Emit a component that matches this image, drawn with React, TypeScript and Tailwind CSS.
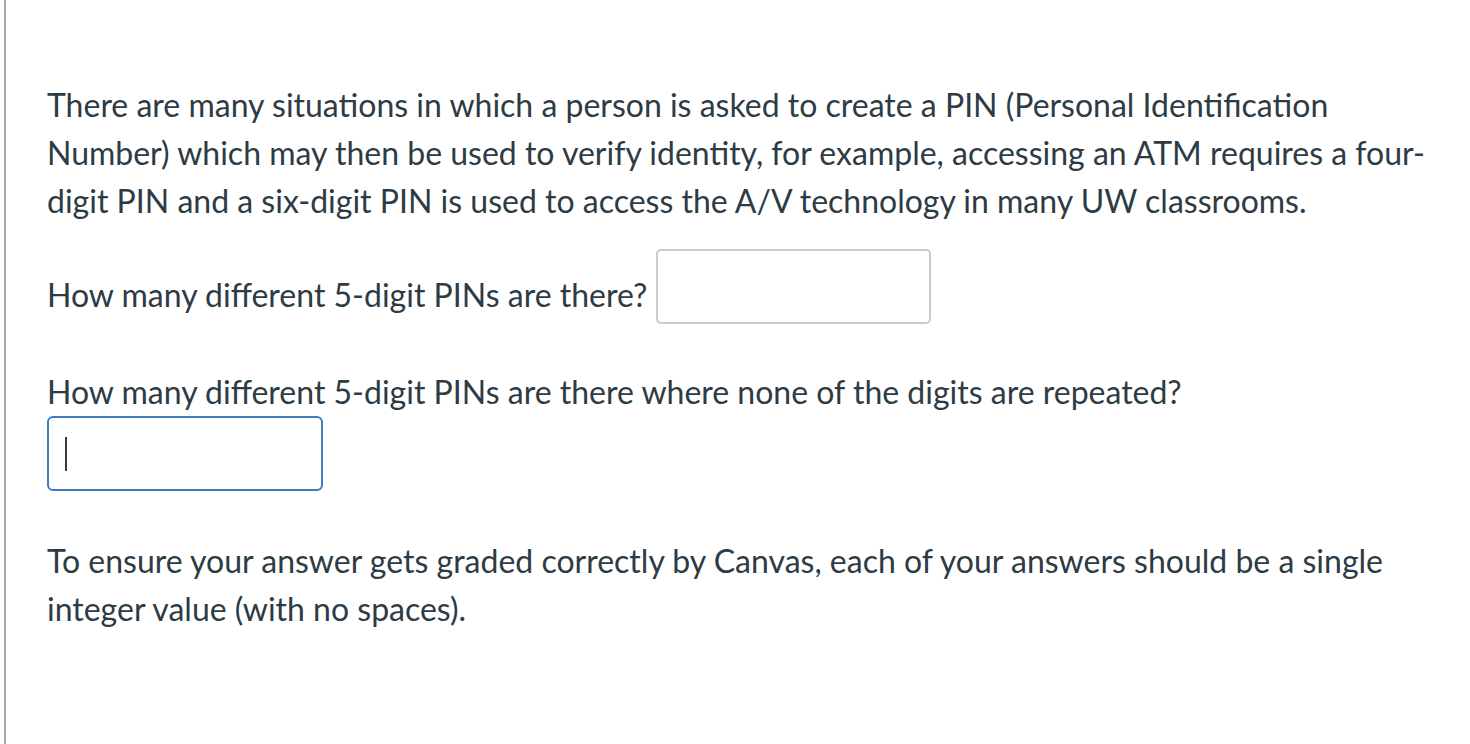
export default function App() {
  return (
    <div className="w-[1470px] h-[744px] bg-white overflow-hidden" style={{ fontFamily: 'Lato, "Noto Sans", sans-serif' }}>
      <div className="ml-[4px] h-full border-l-2 border-[#a8a8a8] pl-[41px] pr-[20px] text-[32px] leading-[48px] text-[#2d3b45]">
        <p className="pt-[81px]">
          There are many situations in which a person is asked to create a PIN (Personal Identification Number) which may then be used to verify identity, for example, accessing an ATM requires a four-digit PIN and a six-digit PIN is used to access the A/V technology in many UW classrooms.
        </p>
        <div className="mt-[24px] flex items-start">
          <span className="mt-[22px]">How many different 5-digit PINs are there?</span>
          <div className="ml-[9px] w-[275px] h-[75px] rounded-[5px] border-2 border-[#cbcbcb] bg-white" />
        </div>
        <p className="mt-[44px]">How many different 5-digit PINs are there where none of the digits are repeated?</p>
        <div className="w-[276px] h-[75px] rounded-[6px] border-2 border-[#3d7dbd] bg-white flex items-center pl-[16px]">
          <div className="w-[2px] h-[34px] bg-[#2d3b45]" />
        </div>
        <p className="mt-[46px]">
          To ensure your answer gets graded correctly by Canvas, each of your answers should be a single integer value (with no spaces).
        </p>
      </div>
    </div>
  );
}
